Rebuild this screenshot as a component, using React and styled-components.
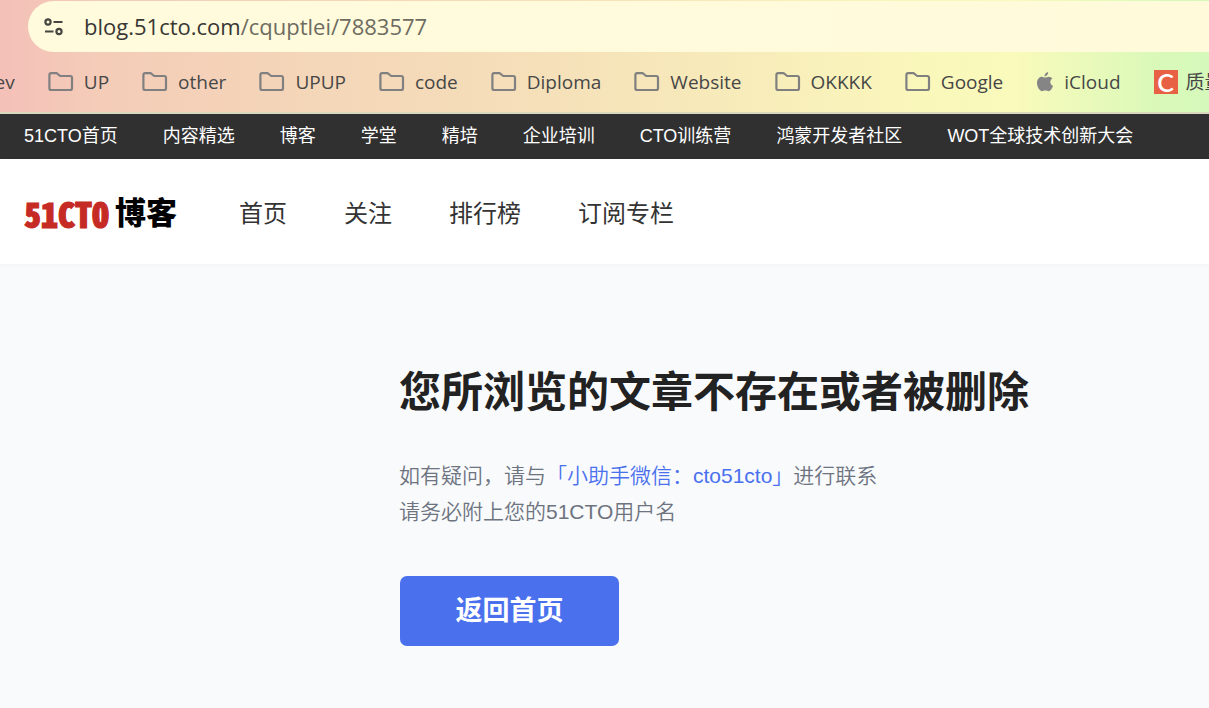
import React from "react";
import styled, { createGlobalStyle } from "styled-components";

const cjk = `"Liberation Sans", "Noto Sans CJK SC", sans-serif`;
const chrome = `"Open Sans", "Noto Sans CJK SC", sans-serif`;

const GlobalStyle = createGlobalStyle`
  * { box-sizing: border-box; }
  html, body { margin: 0; background: #f8fafc; }
  body { font-family: ${cjk}; overflow-x: hidden; }
  a { color: inherit; text-decoration: none; }
`;

const Page = styled.div`
  min-height: 100vh;
  overflow: hidden;
`;

const Browser = styled.div`
  padding-top: 1px;
  background: linear-gradient(90deg, #f4c0b8 0%, #f4ccb8 8%, #f4d5b8 24%, #f5deb9 42%, #f7e9ba 58%, #faf7bb 76%, #f9fabb 84%, #d9f9b9 96%, #d5f9bb 100%);
  border-bottom: 2px solid #dad9bf;
  font-family: ${chrome};
`;

const AddressBar = styled.div`
  display: flex;
  align-items: center;
  gap: 20px;
  height: 51px;
  margin-left: 28px;
  padding-left: 16px;
  border-radius: 26px 0 0 26px;
  background: linear-gradient(90deg, #fffbdc, #fffada);
`;

const SiteButton = styled.button`
  display: flex;
  padding: 0;
  border: 0;
  background: none;
`;

const Address = styled.div`
  padding-bottom: 2px;
  color: #6e6c61;
  font-size: 22px;
  line-height: 30px;
  white-space: nowrap;
`;

const Host = styled.span`
  color: #373733;
`;

const Bookmarks = styled.nav`
  display: flex;
  align-items: center;
  gap: 33px;
  height: 60px;
  margin-left: -17px;
  color: #474747;
  font-size: 19px;
  line-height: 24px;
  white-space: nowrap;
`;

const Bookmark = styled.a`
  display: flex;
  flex: none;
  align-items: center;
  gap: ${(p) => p.$gap || 10}px;
`;

const CBadge = styled.span`
  width: 24px;
  height: 24px;
  background: #e96145;
  color: #fff;
  font-family: Lato, sans-serif;
  font-size: 25px;
  font-weight: 600;
  line-height: 24px;
  text-align: center;
`;

const TopNav = styled.nav`
  display: flex;
  align-items: center;
  gap: 45px;
  height: 45px;
  padding: 0 24px;
  background: #303030;
  color: #fff;
  font-size: 18px;
  line-height: 27px;
  white-space: nowrap;
`;

const Header = styled.header`
  display: flex;
  align-items: center;
  gap: 64px;
  height: 105px;
  padding: 4px 24px 0;
  background: #fff;
  box-shadow: 0 1px 4px rgba(0, 0, 0, 0.04);
`;

const Logo = styled.a`
  display: flex;
  align-items: center;
  gap: 6px;
  width: 151px;
  line-height: 40px;
  white-space: nowrap;
`;

const LogoMark = styled.span`
  color: #c62a24;
  font-family: "Noto Sans CJK SC", sans-serif;
  font-feature-settings: "hwid";
  font-size: 34px;
  font-weight: 900;
  -webkit-text-stroke: 1px #c62a24;
`;

const LogoName = styled.span`
  color: #000;
  font-size: 31px;
  font-weight: 900;
`;

const Menu = styled.nav`
  display: flex;
  gap: 57px;
  color: #333;
  font-size: 24px;
  line-height: 36px;
  white-space: nowrap;
`;

const Main = styled.main`
  padding: 98px 24px 62px 33%;
`;

const Title = styled.h1`
  margin: 0;
  color: #222;
  font-size: 42px;
  font-weight: 700;
  line-height: 62px;
`;

const Message = styled.p`
  margin: 34px 0 46px;
  color: #6e7380;
  font-size: 21px;
  font-weight: 350;
  line-height: 36px;
`;

const Contact = styled.span`
  color: #4a70ee;
`;

const HomeButton = styled.button`
  display: block;
  width: 219px;
  height: 70px;
  margin-left: 1px;
  padding: 0;
  border: 0;
  border-radius: 7px;
  background: #4a70ee;
  color: #fff;
  font-family: inherit;
  font-size: 27px;
  font-weight: 700;
  line-height: 40px;
`;

const FolderIcon = () => (
  <svg width="26" height="22" viewBox="0 0 26 22" fill="none" stroke="#808080" strokeWidth="2.2" strokeLinejoin="round" aria-hidden="true">
    <path d="M3.2 2.2H8.6L12.2 5H22.2Q24 5 24 6.8V17.2Q24 19 22.2 19H3.2Q1.4 19 1.4 17.2V4Q1.4 2.2 3.2 2.2Z" />
  </svg>
);

const TuneIcon = () => (
  <svg width="20" height="18" viewBox="0 0 20 18" fill="none" stroke="#454640" strokeWidth="2.2" aria-hidden="true">
    <circle cx="4" cy="4" r="2.6" />
    <path d="M9.5 4H18.5M1 13.5H9.5" />
    <circle cx="15" cy="13.5" r="2.6" />
  </svg>
);

const AppleIcon = () => (
  <svg width="18" height="22" viewBox="0 0 18 22" fill="#858585" aria-hidden="true">
    <path d="M12.2 1C12.4 3.4 10.5 5.3 8.5 5.4C8.3 3.3 10.1 1.3 12.2 1Z" />
    <path d="M9 6.6C10 6.6 11.1 5.7 12.8 5.7C14.3 5.7 15.6 6.5 16.4 7.6C13.3 9.4 13.9 13.8 17 15C16.1 17.6 14.4 20.2 12.6 20.2C11.4 20.2 10.8 19.5 9.3 19.5C7.7 19.5 7.1 20.2 6 20.2C3.7 20.2 1 15.8 1 12.1C1 8.2 3.4 5.8 5.9 5.8C7.2 5.8 8.2 6.6 9 6.6Z" />
  </svg>
);

const folders = ["UP", "other", "UPUP", "code", "Diploma", "Website", "OKKKK", "Google"];
const topLinks = ["51CTO首页", "内容精选", "博客", "学堂", "精培", "企业培训", "CTO训练营", "鸿蒙开发者社区", "WOT全球技术创新大会"];
const menuLinks = ["首页", "关注", "排行榜", "订阅专栏"];

export default function App() {
  return (
    <Page>
      <GlobalStyle />
      <Browser>
        <AddressBar>
          <SiteButton aria-label="View site information"><TuneIcon /></SiteButton>
          <Address><Host>blog.51cto.com</Host>/cquptlei/7883577</Address>
        </AddressBar>
        <Bookmarks>
          <Bookmark href="#">dev</Bookmark>
          {folders.map((name) => (
            <Bookmark href="#" key={name}><FolderIcon />{name}</Bookmark>
          ))}
          <Bookmark href="#"><AppleIcon />iCloud</Bookmark>
          <Bookmark href="#" $gap={8}><CBadge>C</CBadge>质量</Bookmark>
        </Bookmarks>
      </Browser>
      <TopNav>
        {topLinks.map((name) => <a href="#" key={name}>{name}</a>)}
      </TopNav>
      <Header>
        <Logo href="#"><LogoMark>51CTO</LogoMark><LogoName>博客</LogoName></Logo>
        <Menu>
          {menuLinks.map((name) => <a href="#" key={name}>{name}</a>)}
        </Menu>
      </Header>
      <Main>
        <Title>您所浏览的文章不存在或者被删除</Title>
        <Message>
          如有疑问，请与<Contact>「小助手微信：cto51cto」</Contact>进行联系<br />
          请务必附上您的51CTO用户名
        </Message>
        <HomeButton>返回首页</HomeButton>
      </Main>
    </Page>
  );
}
